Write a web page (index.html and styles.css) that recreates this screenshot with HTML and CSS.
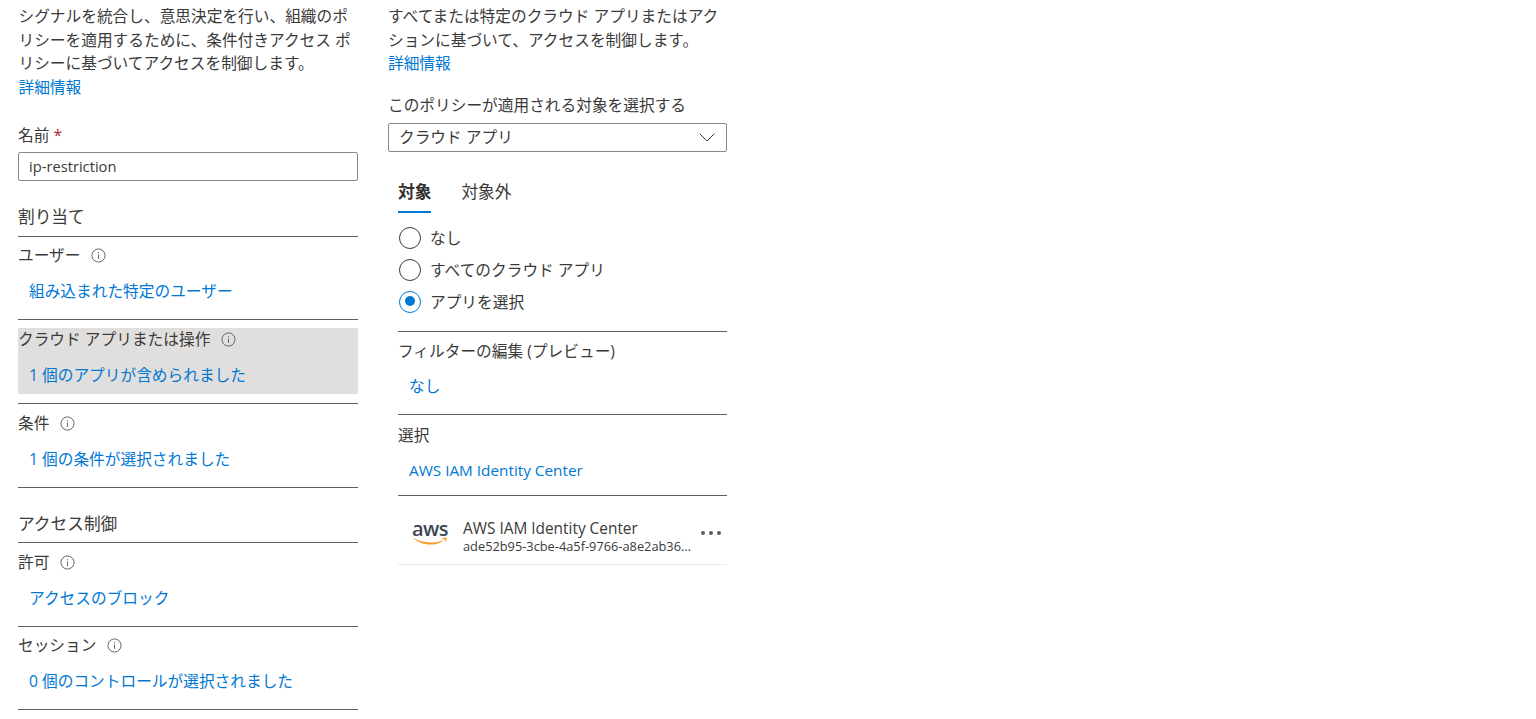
FILE: index.html
```html
<!DOCTYPE html>
<html lang="ja">
<head>
  <meta charset="UTF-8">
  <meta name="viewport" content="width=device-width, initial-scale=1">
  <title>条件付きアクセス</title>

  <link rel="stylesheet" href="styles.css">
</head>
<body>
<div class="Page">
  <!-- Policy summary column -->
  <div class="Policy">
    <p class="Intro">
      シグナルを統合し、意思決定を行い、組織のポ<br>
      リシーを適用するために、条件付きアクセス ポ<br>
      リシーに基づいてアクセスを制御します。<br>
      <a class="Link" href="#">詳細情報</a>
    </p>

    <div class="Policy__NameLabel">名前 <span class="Policy__Required">*</span></div>
    <div class="Field Policy__Name">ip-restriction</div>

    <div class="Section">割り当て</div>
    <div class="Row Row--Short">
      <div class="Row__Label">ユーザー
        <svg class="InfoIcon" viewBox="0 0 16 16"><circle cx="8" cy="8" r="7" /><path d="M8 7v4.6M8 4.4v1.3" /></svg>
      </div>
      <a class="Row__Value Link" href="#">組み込まれた特定のユーザー</a>
    </div>
    <div class="Row Row--Active">
      <div class="Row__Label">クラウド アプリまたは操作
        <svg class="InfoIcon" viewBox="0 0 16 16"><circle cx="8" cy="8" r="7" /><path d="M8 7v4.6M8 4.4v1.3" /></svg>
      </div>
      <a class="Row__Value Link" href="#">1 個のアプリが含められました</a>
    </div>
    <div class="Row">
      <div class="Row__Label">条件
        <svg class="InfoIcon" viewBox="0 0 16 16"><circle cx="8" cy="8" r="7" /><path d="M8 7v4.6M8 4.4v1.3" /></svg>
      </div>
      <a class="Row__Value Link" href="#">1 個の条件が選択されました</a>
    </div>

    <div class="Section Section--Access">アクセス制御</div>
    <div class="Row">
      <div class="Row__Label">許可
        <svg class="InfoIcon" viewBox="0 0 16 16"><circle cx="8" cy="8" r="7" /><path d="M8 7v4.6M8 4.4v1.3" /></svg>
      </div>
      <a class="Row__Value Link" href="#">アクセスのブロック</a>
    </div>
    <div class="Row Row--Short">
      <div class="Row__Label">セッション
        <svg class="InfoIcon" viewBox="0 0 16 16"><circle cx="8" cy="8" r="7" /><path d="M8 7v4.6M8 4.4v1.3" /></svg>
      </div>
      <a class="Row__Value Link" href="#">0 個のコントロールが選択されました</a>
    </div>
  </div>

  <!-- Cloud apps column -->
  <div class="Apps">
    <p class="Intro">
      すべてまたは特定のクラウド アプリまたはアク<br>
      ションに基づいて、アクセスを制御します。<br>
      <a class="Link" href="#">詳細情報</a>
    </p>

    <div class="Apps__TargetLabel">このポリシーが適用される対象を選択する</div>
    <div class="Field Apps__Target">
      クラウド アプリ
      <svg class="Chevron" viewBox="0 0 16 9"><path d="M.7.7 8 8 15.3.7" /></svg>
    </div>

    <div class="Apps__Body">
      <div class="Tabs">
        <div class="Tabs__Tab Tabs__Tab--Selected">対象</div>
        <div class="Tabs__Tab">対象外</div>
      </div>

      <div class="Radios">
        <div class="Radio"><span class="Radio__Dot"></span>なし</div>
        <div class="Radio"><span class="Radio__Dot"></span>すべてのクラウド アプリ</div>
        <div class="Radio Radio--Checked"><span class="Radio__Dot"></span>アプリを選択</div>
      </div>

      <div class="Block Block--Filter">
        <div class="Row__Label">フィルターの編集 (プレビュー)</div>
        <a class="Block__Value Link" href="#">なし</a>
      </div>
      <div class="Block Block--Select">
        <div class="Row__Label">選択</div>
        <a class="Block__Value Block__Value--Latin Link" href="#">AWS IAM Identity Center</a>
      </div>

      <div class="AppItem">
        <div class="AppItem__Logo">
          <span class="AppItem__LogoText">aws</span>
          <svg class="AppItem__Smile" viewBox="0 0 36 10">
            <path class="AppItem__SmileCurve" d="M.6 1.6C9 7.2 24 8.2 32.6 3.4 25 10.8 9 10.4 .6 1.6Z" />
            <path class="AppItem__SmileCurve" d="M29.2 2.2 35 1.2 33.4 7.2C33.8 4.8 33.4 3 29.2 2.2Z" />
          </svg>
        </div>
        <div class="AppItem__Text">
          <div class="AppItem__Name">AWS IAM Identity Center</div>
          <div class="AppItem__Id">ade52b95-3cbe-4a5f-9766-a8e2ab36...</div>
        </div>
        <div class="AppItem__More"><span></span><span></span><span></span></div>
      </div>
    </div>
  </div>
</div>
</body>
</html>
```

FILE: styles.css
```css
html, body {
  padding: 0;
  margin: 0;
  height: 100%;
  background-color: #ffffff;
  overflow: hidden;
  font-family: "Open Sans", "Noto Sans CJK JP", sans-serif;
  font-size: 15.7px;
  line-height: 23.7px;
  color: #3b3a39;
}

.Page {
  display: flex;
  align-items: flex-start;
  padding: 5px 0 0 18px;
}

.Policy {
  width: 340px;
}

.Apps {
  width: 339px;
  margin-left: 30px;
}

.Intro {
  margin: 0;
}

.Policy .Intro {
  margin-left: 0.5px;
}

.Link {
  color: #0078d4;
  text-decoration: none;
}

.Field {
  box-sizing: border-box;
  display: flex;
  align-items: center;
  justify-content: space-between;
  height: 29px;
  padding: 2px 10px 0;
  background-color: #ffffff;
  border: 1px solid #8a8886;
  border-radius: 2px;
}

.Policy__NameLabel {
  margin-top: 24px;
}

.Policy__Required {
  color: #a4262c;
}

.Policy__Name {
  margin-top: 4px;
  font-size: 14.7px;
}

.Section {
  height: 31px;
  padding-top: 24px;
  border-bottom: 1px solid #605e5c;
  font-size: 16.7px;
}

.Section--Access {
  height: 30px;
}

.Row {
  box-sizing: border-box;
  height: 84px;
  padding-top: 8px;
  border-bottom: 1px solid #605e5c;
}

.Row--Short {
  height: 83px;
  padding-top: 7px;
}

.Row--Active {
  padding-top: 8px;
  background: linear-gradient(#e1dfdd, #e1dfdd) no-repeat 0 8px / 100% 66px;
}

.Row__Label {
  display: flex;
  align-items: center;
  height: 24px;
}

.Row__Value {
  display: block;
  height: 24px;
  margin-top: 12px;
  padding-left: 11px;
}

.InfoIcon {
  width: 15px;
  height: 15px;
  margin-left: 11px;
  fill: none;
  stroke: #605e5c;
  stroke-width: 1;
}

.Apps__TargetLabel {
  margin-top: 18px;
}

.Apps__Target {
  margin-top: 5px;
}

.Chevron {
  width: 16px;
  height: 9px;
  margin: -2px 1px 0 0;
  fill: none;
  stroke: #3b3a39;
  stroke-width: 1;
}

.Apps__Body {
  margin-left: 10px;
  width: 329px;
}

.Tabs {
  display: flex;
  gap: 30px;
  margin-top: 16px;
}

.Tabs__Tab {
  height: 31px;
  padding-top: 12px;
  line-height: 24px;
  font-size: 16.7px;
  border-bottom: 2px solid transparent;
}

.Tabs__Tab--Selected {
  font-weight: 700;
  color: #323130;
  border-bottom-color: #0078d4;
}

.Radios {
  margin-top: 9px;
}

.Radio {
  box-sizing: border-box;
  display: flex;
  align-items: center;
  gap: 9px;
  height: 32px;
  padding: 2px 0 0 1px;
}

.Radio__Dot {
  box-sizing: border-box;
  position: relative;
  width: 22px;
  height: 22px;
  margin-top: -2px;
  border: 1.5px solid #3b3a39;
  border-radius: 50%;
}

.Radio--Checked .Radio__Dot {
  border-color: #0078d4;
}

.Radio--Checked .Radio__Dot::after {
  content: "";
  position: absolute;
  top: 4.5px;
  left: 4.5px;
  width: 10px;
  height: 10px;
  background-color: #0078d4;
  border-radius: 50%;
}

.Block {
  border-top: 1px solid #605e5c;
}

.Block--Filter {
  margin-top: 13px;
  height: 74px;
  padding-top: 8px;
}

.Block--Select {
  height: 71px;
  padding-top: 9px;
}

.Block__Value {
  display: block;
  height: 24px;
  margin-top: 11px;
  padding-left: 11px;
}

.Block__Value--Latin {
  font-size: 15.3px;
}

.AppItem {
  display: flex;
  align-items: center;
  height: 54px;
  padding-top: 14px;
  border-top: 1px solid #605e5c;
  border-bottom: 1px solid #edebe9;
}

.AppItem__Logo {
  display: flex;
  flex-direction: column;
  align-items: center;
  width: 36px;
  margin: -6px 0 0 14px;
}

.AppItem__LogoText {
  height: 15px;
  line-height: 15px;
  font-size: 20px;
  font-weight: 600;
  letter-spacing: -0.5px;
  color: #3a4655;
}

.AppItem__Smile {
  width: 36px;
  height: 10px;
}

.AppItem__SmileCurve {
  fill: #f79c2d;
}

.AppItem__Text {
  flex: 1;
  margin-left: 15px;
}

.AppItem__Name {
  line-height: 20px;
  font-size: 15.4px;
}

.AppItem__Id {
  margin-top: -1px;
  line-height: 16px;
  font-size: 12.8px;
}

.AppItem__More {
  display: flex;
  gap: 4px;
  margin: -8px 6px 0 0;
}

.AppItem__More span {
  width: 4px;
  height: 4px;
  background-color: #605e5c;
  border-radius: 50%;
}
```
